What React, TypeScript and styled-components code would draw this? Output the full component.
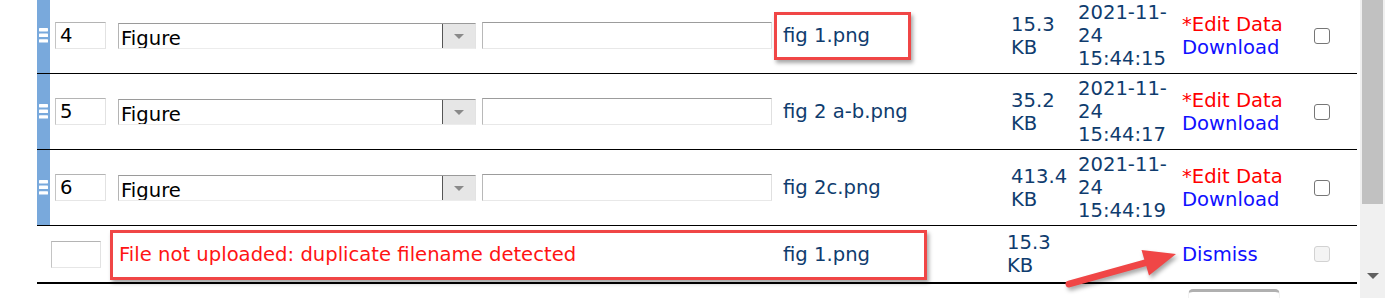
import React from "react";
import styled, { createGlobalStyle } from "styled-components";

const GlobalStyle = createGlobalStyle`
  html, body { margin: 0; padding: 0; background: #fff; }
  body {
    font-family: "DejaVu Sans", Verdana, sans-serif;
    font-size: 19.6px;
    color: #000;
  }
  #root { height: 298px; overflow: hidden; }
`;

const COLS = "13px 63px 366px 297px 229px 69px 102px 124px 57px";

const Screen = styled.div`
  position: relative;
  display: flex;
  width: 1391px;
  height: 298px;
  overflow: hidden;
  background: #fff;
`;

const Page = styled.div`
  width: 1360px;
  flex-shrink: 0;
  box-sizing: border-box;
  padding: 0 3px 0 37px;
`;

const Table = styled.div`
  margin-top: -2px;
  display: flex;
  flex-direction: column;
`;

const Row = styled.div<{ $last?: boolean }>`
  display: grid;
  grid-template-columns: ${COLS};
  align-items: center;
  height: ${(p) => (p.$last ? 56 : 75)}px;
  border-bottom: ${(p) => (p.$last ? 2 : 1)}px solid #000;
`;

const HandleCell = styled.div`
  align-self: stretch;
  background: #79a9dc;
  display: flex;
  align-items: center;
  justify-content: center;
`;

const Cell = styled.div<{ $pl?: number; $span?: string }>`
  padding-left: ${(p) => p.$pl ?? 0}px;
  grid-column: ${(p) => p.$span ?? "auto"};
  min-width: 0;
  line-height: 23px;
`;

const OrderInput = styled.input<{ $w?: number }>`
  display: block;
  width: ${(p) => p.$w ?? 51}px;
  height: 27px;
  box-sizing: border-box;
  margin: 0;
  padding: 0 4px;
  border: 1px solid;
  border-color: #b4b4b4 #e2e2e2 #e6e6e6 #c4c4c4;
  font: inherit;
  font-size: 19.6px;
  color: #000;
  background: #fff;
  outline: none;
`;

const CaptionInput = styled(OrderInput)`
  width: 290px;
  border-color: #9c9c9c #e0e0e0 #e8e8e8 #b8b8b8;
`;

const Select = styled.div`
  display: flex;
  width: 358px;
  height: 26px;
  box-sizing: border-box;
  border: 1px solid;
  border-color: #9a9a9a #e3e3e3 #ececec #b4b4b4;
  background: #fff;
  overflow: hidden;
`;

const SelectValue = styled.div`
  flex: 1;
  padding: 3px 0 0 2px;
  line-height: 24px;
  white-space: nowrap;
  overflow: hidden;
  color: #000;
`;

const SelectArrow = styled.div`
  width: 33px;
  background: #e6e6e6;
  border-left: 1px solid #555;
  display: flex;
  align-items: center;
  justify-content: center;
  padding-top: 2px;
  box-sizing: border-box;

  &::after {
    content: "";
    width: 0;
    height: 0;
    border-left: 5px solid transparent;
    border-right: 5px solid transparent;
    border-top: 5px solid #8a8a8a;
  }
`;

const FileName = styled.span`
  color: #0f3c6e;
  white-space: nowrap;
`;

const Info = styled.div<{ $w: number }>`
  color: #0f3c6e;
  width: ${(p) => p.$w}px;
  line-height: 23px;
`;

const Actions = styled.div`
  display: flex;
  flex-direction: column;
  line-height: 23px;
`;

const EditLink = styled.span`
  color: #ff0000;
`;

const BlueLink = styled.span`
  color: #1010ff;
`;

const ErrorText = styled.span`
  color: #ff1414;
  white-space: nowrap;
`;

const Check = styled.span<{ $disabled?: boolean }>`
  display: block;
  width: 16px;
  height: 16px;
  box-sizing: border-box;
  border-radius: 3px;
  border: 1.5px solid ${(p) => (p.$disabled ? "#d2d2d2" : "#767676")};
  background: ${(p) => (p.$disabled ? "#f4f4f4" : "#fff")};
`;

const Footer = styled.div`
  display: grid;
  grid-template-columns: ${COLS};
  padding-top: 5px;
`;

const GhostButton = styled.div`
  grid-column: 8;
  margin-left: 12px;
  width: 92px;
  height: 30px;
  box-sizing: border-box;
  border: 1px solid #f2f2f2;
  border-top: 3px solid #b0b0b0;
  border-radius: 5px 5px 0 0;
  background: #fff;
`;

const ScrollTrack = styled.div`
  width: 25px;
  height: 298px;
  flex-shrink: 0;
  background: #f0f0f0;
  display: flex;
  flex-direction: column;
  align-items: center;
`;

const ScrollThumb = styled.div`
  width: 21px;
  height: 204px;
  background: #c1c1c1;
`;

const ScrollArrow = styled.div`
  margin-top: auto;
  margin-bottom: 19px;
  width: 0;
  height: 0;
  border-left: 6px solid transparent;
  border-right: 6px solid transparent;
  border-top: 6px solid #606060;
`;

const Callout = styled.div<{ $l: number; $t: number; $w: number; $h: number }>`
  position: absolute;
  left: ${(p) => p.$l}px;
  top: ${(p) => p.$t}px;
  width: ${(p) => p.$w}px;
  height: ${(p) => p.$h}px;
  box-sizing: border-box;
  border: 3px solid #f04646;
  box-shadow: 2px 3px 4px rgba(0, 0, 0, 0.35);
  pointer-events: none;
`;

const ArrowLayer = styled.svg`
  position: absolute;
  left: 0;
  top: 0;
  pointer-events: none;
  overflow: visible;
  filter: drop-shadow(2px 3px 2px rgba(0, 0, 0, 0.35));
`;

const DragHandle = () => (
  <svg width="9" height="15" viewBox="0 0 9 15">
    <rect x="0" y="0" width="9" height="3.4" rx="0.6" fill="#fff" />
    <rect x="0" y="5.6" width="9" height="3.4" rx="0.6" fill="#fff" />
    <rect x="0" y="11.2" width="9" height="3.4" rx="0.6" fill="#fff" />
  </svg>
);

type FileRow = {
  order: string;
  name: string;
  size: string;
  date: string;
};

const rows: FileRow[] = [
  { order: "4", name: "fig 1.png", size: "15.3 KB", date: "2021-11-24 15:44:15" },
  { order: "5", name: "fig 2 a-b.png", size: "35.2 KB", date: "2021-11-24 15:44:17" },
  { order: "6", name: "fig 2c.png", size: "413.4 KB", date: "2021-11-24 15:44:19" },
];

export default function App() {
  return (
    <>
      <GlobalStyle />
      <Screen>
        <Page>
          <Table>
            {rows.map((r) => (
              <Row key={r.order}>
                <HandleCell>
                  <DragHandle />
                </HandleCell>
                <Cell $pl={5}>
                  <OrderInput readOnly value={r.order} />
                </Cell>
                <Cell $pl={5}>
                  <Select>
                    <SelectValue>Figure</SelectValue>
                    <SelectArrow />
                  </Select>
                </Cell>
                <Cell $pl={3}>
                  <CaptionInput readOnly value="" />
                </Cell>
                <Cell $pl={7}>
                  <FileName>{r.name}</FileName>
                </Cell>
                <Cell $pl={6}>
                  <Info $w={60}>{r.size}</Info>
                </Cell>
                <Cell $pl={4}>
                  <Info $w={97}>{r.date}</Info>
                </Cell>
                <Cell $pl={6}>
                  <Actions>
                    <EditLink>*Edit Data</EditLink>
                    <BlueLink>Download</BlueLink>
                  </Actions>
                </Cell>
                <Cell $pl={14}>
                  <Check />
                </Cell>
              </Row>
            ))}
            <Row $last>
              <Cell $pl={14} $span="1 / 3">
                <OrderInput $w={50} readOnly value="" />
              </Cell>
              <Cell $pl={6} $span="3 / 5">
                <ErrorText>File not uploaded: duplicate filename detected</ErrorText>
              </Cell>
              <Cell $pl={7}>
                <FileName>fig 1.png</FileName>
              </Cell>
              <Cell $pl={2}>
                <Info $w={60}>15.3 KB</Info>
              </Cell>
              <Cell />
              <Cell $pl={6}>
                <BlueLink>Dismiss</BlueLink>
              </Cell>
              <Cell $pl={14}>
                <Check $disabled />
              </Cell>
            </Row>
          </Table>
          <Footer>
            <GhostButton />
          </Footer>
        </Page>
        <ScrollTrack>
          <ScrollThumb />
          <ScrollArrow />
        </ScrollTrack>

        <Callout $l={774} $t={12} $w={137} $h={48} />
        <Callout $l={110} $t={230} $w={817} $h={50} />
        <ArrowLayer width="1391" height="298">
          <line
            x1="1069"
            y1="284"
            x2="1150"
            y2="261.5"
            stroke="#f04646"
            strokeWidth="7"
            strokeLinecap="round"
          />
          <polygon points="1176,254 1141.5,250 1149,275.5" fill="#f04646" />
        </ArrowLayer>
      </Screen>
    </>
  );
}
